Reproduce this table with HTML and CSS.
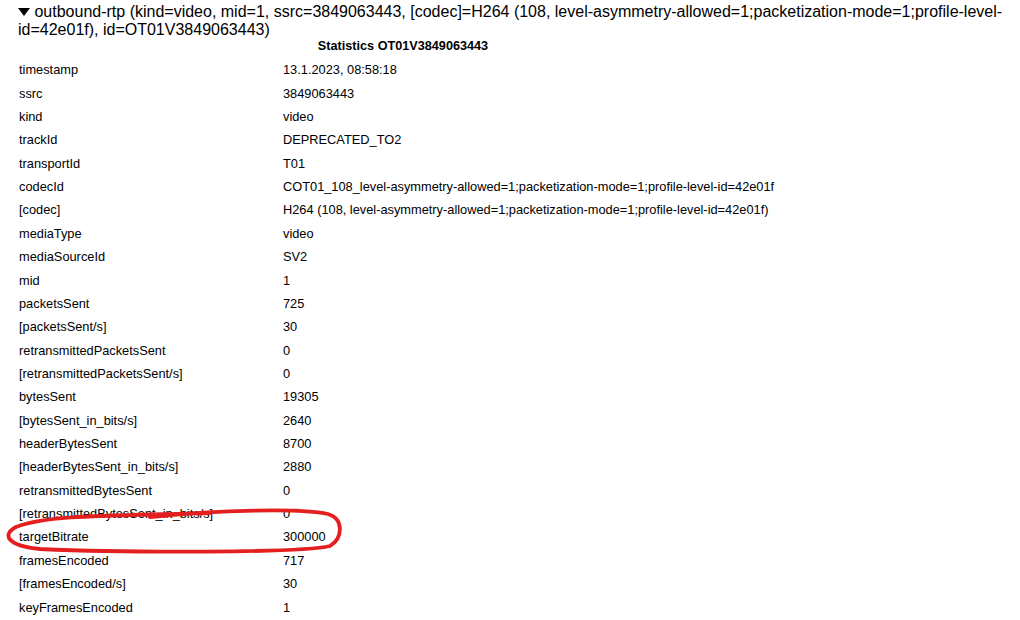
FILE: index.html
```html
<!DOCTYPE html>
<html lang="en">
<head>
<meta charset="utf-8">
<title>webrtc-internals</title>
<link rel="stylesheet" href="styles.css">
</head>
<body>
<details class="stats" open>
  <summary class="stats-summary"><span class="marker" aria-hidden="true"></span> outbound-rtp (kind=video, mid=1, ssrc=3849063443, [codec]=H264 (108, level-asymmetry-allowed=1;packetization-mode=1;profile-level-id=42e01f), id=OT01V3849063443)</summary>
  <table class="stats-table">
    <caption>Statistics OT01V3849063443</caption>
    <tbody>
      <tr><td class="key">timestamp</td><td>13.1.2023, 08:58:18</td></tr>
      <tr><td class="key">ssrc</td><td>3849063443</td></tr>
      <tr><td class="key">kind</td><td>video</td></tr>
      <tr><td class="key">trackId</td><td>DEPRECATED_TO2</td></tr>
      <tr><td class="key">transportId</td><td>T01</td></tr>
      <tr><td class="key">codecId</td><td>COT01_108_level-asymmetry-allowed=1;packetization-mode=1;profile-level-id=42e01f</td></tr>
      <tr><td class="key">[codec]</td><td>H264 (108, level-asymmetry-allowed=1;packetization-mode=1;profile-level-id=42e01f)</td></tr>
      <tr><td class="key">mediaType</td><td>video</td></tr>
      <tr><td class="key">mediaSourceId</td><td>SV2</td></tr>
      <tr><td class="key">mid</td><td>1</td></tr>
      <tr><td class="key">packetsSent</td><td>725</td></tr>
      <tr><td class="key">[packetsSent/s]</td><td>30</td></tr>
      <tr><td class="key">retransmittedPacketsSent</td><td>0</td></tr>
      <tr><td class="key">[retransmittedPacketsSent/s]</td><td>0</td></tr>
      <tr><td class="key">bytesSent</td><td>19305</td></tr>
      <tr><td class="key">[bytesSent_in_bits/s]</td><td>2640</td></tr>
      <tr><td class="key">headerBytesSent</td><td>8700</td></tr>
      <tr><td class="key">[headerBytesSent_in_bits/s]</td><td>2880</td></tr>
      <tr><td class="key">retransmittedBytesSent</td><td>0</td></tr>
      <tr><td class="key">[retransmittedBytesSent_in_bits/s]</td><td>0</td></tr>
      <tr><td class="key">targetBitrate</td><td>300000</td></tr>
      <tr><td class="key">framesEncoded</td><td>717</td></tr>
      <tr><td class="key">[framesEncoded/s]</td><td>30</td></tr>
      <tr><td class="key">keyFramesEncoded</td><td>1</td></tr>
    </tbody>
  </table>
</details>
<svg class="annotation" width="1020" height="620" viewBox="0 0 1020 620" aria-hidden="true">
  <path d="M 150 517 C 220 510, 300 508, 328 514 C 344 519, 343 538, 330 546 C 300 553, 130 553, 40 549 C 8 546, 1 535, 16 527 C 50 514, 120 516, 210 513" fill="none" stroke="#e3201f" stroke-width="3.8" stroke-linecap="round" stroke-linejoin="round"/>
</svg>
</body>
</html>
```

FILE: styles.css
```css
html, body {
  margin: 0;
  padding: 0;
  background: #fff;
  color: #000;
  font-family: "Liberation Sans", Arial, sans-serif;
}

body {
  padding: 3px 8px 0 18px;
}

.stats-summary {
  list-style: none;
  font-size: 16px;
  line-height: 18px;
  cursor: pointer;
}

.stats-summary::-webkit-details-marker {
  display: none;
}

.marker {
  display: inline-block;
  width: 0;
  height: 0;
  border-left: 6px solid transparent;
  border-right: 6px solid transparent;
  border-top: 8px solid #000;
  vertical-align: 1px;
}

.stats-table {
  width: 770px;
  border-collapse: collapse;
  border-spacing: 0;
  font-size: 12.8px;
  line-height: 15.36px;
}

.stats-table caption {
  font-size: 12.67px;
  font-weight: bold;
  line-height: 14.5px;
  padding: 0 0 4.8px;
}

.stats-table td {
  padding: 4px 1px;
  vertical-align: middle;
  white-space: nowrap;
}

.stats-table td.key {
  width: 262px;
}

.annotation {
  position: absolute;
  left: 0;
  top: 0;
  pointer-events: none;
}
```
